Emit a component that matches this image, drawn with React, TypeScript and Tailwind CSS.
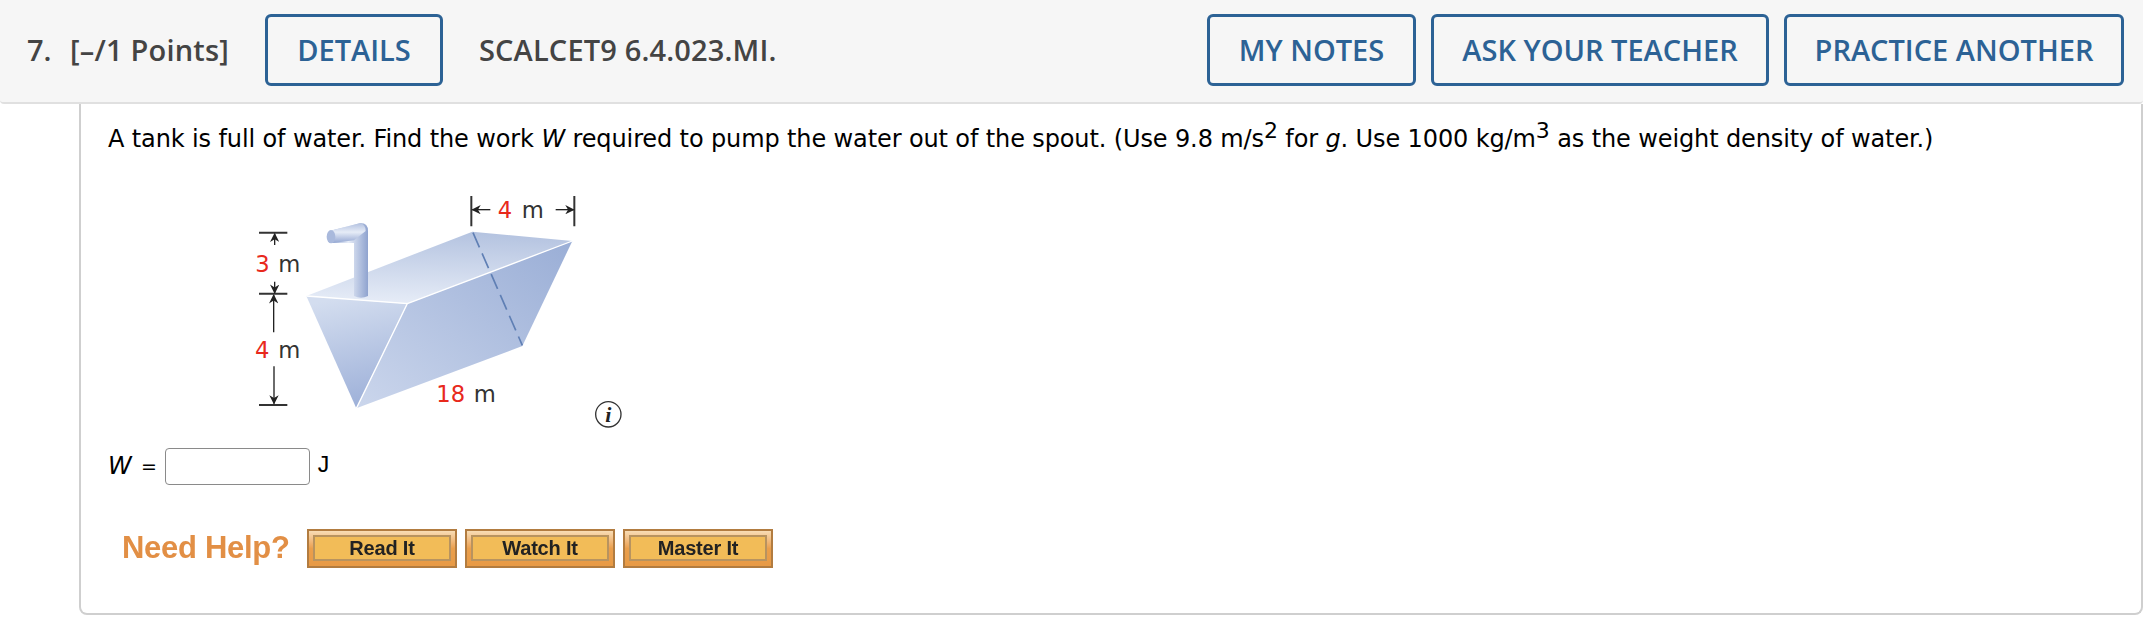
export default function App() {
  const body = { fontFamily: '"DejaVu Sans", sans-serif' };
  const head = { fontFamily: '"Open Sans", sans-serif' };
  const btn =
    "h-[72px] flex items-center justify-center border-[3px] border-[#2c6295] rounded-md text-[#2c6295] text-[29px] font-semibold";
  return (
    <div className="w-[2148px] h-[622px] bg-white overflow-hidden relative">
      <div style={head} className="w-[2143px] h-[104px] bg-[#f6f6f6] border-b-2 border-[#e0e0e0] rounded-b-sm flex items-center pl-[27px] pr-[19px] pb-[3px] text-[#444444]">
        <span className="text-[29px] font-semibold w-[43px]">7.</span>
        <span className="text-[29px] font-semibold w-[195px] tracking-[0.2px]">[–/1 Points]</span>
        <div className={`${btn} w-[178px]`}>DETAILS</div>
        <span className="text-[29px] font-semibold ml-[36px] tracking-[0.15px]">SCALCET9 6.4.023.MI.</span>
        <div className="ml-auto flex gap-[15px]">
          <div className={`${btn} w-[209px]`}>MY NOTES</div>
          <div className={`${btn} w-[338px]`}>ASK YOUR TEACHER</div>
          <div className={`${btn} w-[340px]`}>PRACTICE ANOTHER</div>
        </div>
      </div>
      <div className="ml-[79px] w-[2064px] h-[511px] border-l-2 border-r-2 border-b-2 border-[#cfcfcf] rounded-b-lg pl-[27px] pt-[21px] text-black" style={body}>
        <p className="text-[24px] leading-[28px] whitespace-nowrap tracking-[-0.12px]">
          A tank is full of water. Find the work <i>W</i> required to pump the water out of the spout. (Use 9.8 m/s
          <sup className="text-[22px] -top-[9px]">2</sup> for <i>g</i>. Use 1000 kg/m
          <sup className="text-[22px] -top-[9px]">3</sup> as the weight density of water.)
        </p>
        <Tank />
        <div className="flex items-center h-[38px] mt-[6px]">
          <i className="text-[24px] w-[24px]">W</i>
          <span className="text-[19px] ml-[9px] w-[24px]">=</span>
          <div className="w-[145px] h-[37px] border border-[#8a8a8a] rounded-[4px] bg-white"></div>
          <span className="text-[24px] ml-[6px]" style={{ fontFamily: '"Liberation Mono", monospace' }}>J</span>
        </div>
        <div className="flex items-center mt-[40px] ml-[15px]" style={{ fontFamily: '"Liberation Sans", sans-serif' }}>
          <span className="text-[31px] font-bold text-[#e28f45] tracking-[-0.3px] w-[184px] -ml-[1px] mr-[1px] blur-[0.4px]">Need Help?</span>
          <div className="flex gap-[8px]">
            <HelpBtn label="Read It" />
            <HelpBtn label="Watch It" />
            <HelpBtn label="Master It" />
          </div>
        </div>
      </div>
    </div>
  );
}

function HelpBtn({ label }: { label: string }) {
  return (
    <div className="w-[150px] h-[39px] border-2 border-[#b27c40] bg-gradient-to-b from-[#f8dcb4] via-[#ea9f4c] to-[#e89a45] p-[4px_4px_5px_4px] blur-[0.3px]">
      <div className="w-full h-full border-2 border-[#b8935f] bg-[#f2bc58] flex items-center justify-center text-[20px] tracking-[-0.2px] font-bold text-[#222222]">
        {label}
      </div>
    </div>
  );
}

function Tank() {
  const font = '"DejaVu Sans", sans-serif';
  const dark = "#333333";
  const red = "#e8291c";
  return (
    <svg width="420" height="260" viewBox="0 0 1260 780" className="block ml-[111px] mt-[28px]">
      <defs>
        <linearGradient id="top" x1="0.55" y1="0" x2="0.45" y2="1">
          <stop offset="0" stopColor="#b4c3e0" />
          <stop offset="1" stopColor="#e6ecf7" />
        </linearGradient>
        <linearGradient id="end" x1="0.4" y1="0" x2="0.6" y2="1">
          <stop offset="0" stopColor="#d3ddef" />
          <stop offset="1" stopColor="#9cafd8" />
        </linearGradient>
        <linearGradient id="side" x1="0" y1="1" x2="1" y2="0">
          <stop offset="0" stopColor="#cbd6ec" />
          <stop offset="1" stopColor="#9aaed6" />
        </linearGradient>
        <linearGradient id="pipe" x1="0" y1="0" x2="1" y2="0">
          <stop offset="0" stopColor="#a4b4d8" />
          <stop offset="0.45" stopColor="#e6ecf7" />
          <stop offset="1" stopColor="#8fa3cf" />
        </linearGradient>
        <linearGradient id="pipeH" x1="0" y1="0" x2="0" y2="1">
          <stop offset="0" stopColor="#b4c2e0" />
          <stop offset="0.45" stopColor="#e6ecf7" />
          <stop offset="1" stopColor="#94a7d2" />
        </linearGradient>
        <marker id="ah" viewBox="0 0 10 10" refX="9" refY="5" markerWidth="9" markerHeight="7" orient="auto-start-reverse">
          <path d="M0 0L10 5L0 10L3 5Z" fill="#222222" />
        </marker>
      </defs>

      <polygon points="760,152 1060,180 565,368 262,345" fill="url(#top)" />
      <polygon points="262,345 565,368 412,682" fill="url(#end)" />
      <polygon points="565,368 1060,180 910,495 412,682" fill="url(#side)" />
      <path d="M565 368L1060 180M262 345L565 368L412 682" stroke="#ffffff" strokeWidth="4" fill="none" />
      <path d="M762 155L910 493" stroke="#5f7fb4" strokeWidth="5" strokeDasharray="48 20" fill="none" />

      <path d="M405 345V186H340V148L425 126Q447 126 447 150V345Q426 356 405 345Z" fill="url(#pipe)" />
      <path d="M340 148L422 127Q440 130 440 150L405 178L340 186Z" fill="url(#pipeH)" />
      <ellipse cx="336" cy="167" rx="13" ry="20" fill="#a9b9dc" />

      <g stroke={dark} strokeWidth="6">
        <path d="M757 45V136M1066 45V136" />
        <path d="M120 155H205M120 338H205M120 672H205" />
      </g>
      <g stroke="#222222" strokeWidth="4" fill="none">
        <path d="M814 86H760" markerEnd="url(#ah)" />
        <path d="M1010 86H1064" markerEnd="url(#ah)" />
        <path d="M167 192V158" markerEnd="url(#ah)" />
        <path d="M167 302V336" markerEnd="url(#ah)" />
        <path d="M164 454V342" markerEnd="url(#ah)" />
        <path d="M165 556V668" markerEnd="url(#ah)" />
      </g>

      <g fontFamily={font} fontSize="68">
        <text x="836" y="110" fill={red}>4</text>
        <text x="908" y="110" fill={dark}>m</text>
        <text x="109" y="272" fill={red}>3</text>
        <text x="178" y="272" fill={dark}>m</text>
        <text x="108" y="530" fill={red}>4</text>
        <text x="178" y="530" fill={dark}>m</text>
        <text x="652" y="664" fill={red}>18</text>
        <text x="764" y="664" fill={dark}>m</text>
      </g>

      <circle cx="1168" cy="700" r="38" fill="#ffffff" stroke="#333333" strokeWidth="4" />
      <text x="1168" y="724" textAnchor="middle" fontFamily='"Liberation Serif", serif' fontStyle="italic" fontWeight="bold" fontSize="66" fill="#222222">i</text>
    </svg>
  );
}
